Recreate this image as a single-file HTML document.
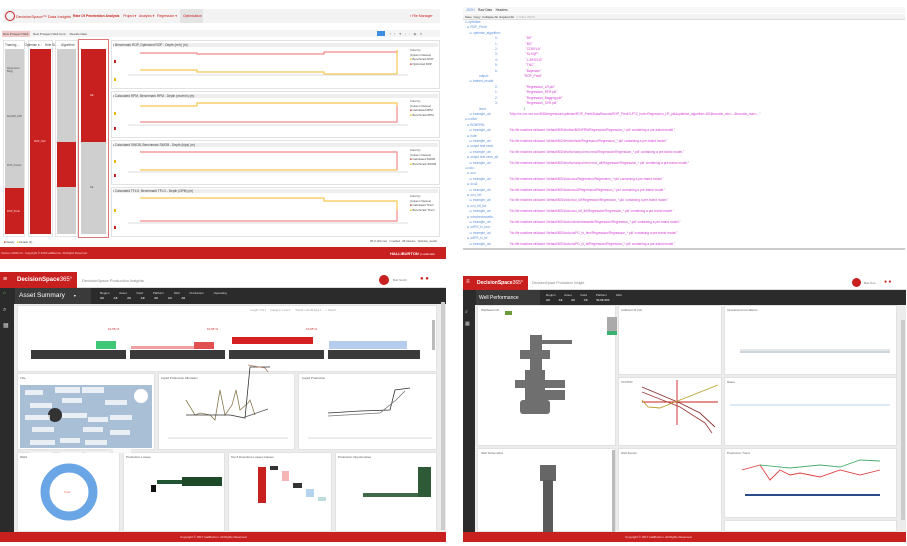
<html><head><style>
*{margin:0;padding:0;box-sizing:border-box}
body{width:907px;height:546px;background:#fff;position:relative;overflow:hidden;font-family:"Liberation Sans",sans-serif;font-size:3px;color:#444}
div{position:absolute}
.r{background:#c8201f}.g{background:#cfcfcf}
.pn{background:#fff;border:1px solid #e2e2e2}
.j{white-space:nowrap;font-size:3.2px;line-height:5.4px}
.k{color:#5b8fd8}.v{color:#d23bd0}
.dk{background:#2b2b2b}
</style></head><body>

<!-- TOP LEFT -->
<div style="left:3px;top:9px;width:437px;height:14px;background:#f3f3f3"></div>
<div style="left:5px;top:11px;width:10px;height:10px;border-radius:50%;border:1.5px solid #c8201f"></div>
<div style="left:16px;top:13.5px;font-size:4px;color:#c8201f;white-space:nowrap">DecisionSpace™ Data Insights</div>
<div style="left:73px;top:14px;font-size:3.4px;color:#c8201f;font-weight:bold;white-space:nowrap">Rate Of Penetration Analysis &nbsp;&nbsp; <span style="font-weight:normal">Project ▾ &nbsp; Analysis ▾ &nbsp; Regression ▾</span></div>
<div style="left:180px;top:9px;width:23px;height:14px;background:#e4e4e4"></div>
<div style="left:183px;top:14px;font-size:3.4px;color:#c8201f">Optimisation</div>
<div style="left:410px;top:14px;font-size:3.5px;color:#c8201f">▪ File Manager</div>
<div style="left:2px;top:30px;width:438px;height:7px;background:#f4f4f4"></div>
<div style="left:2px;top:31px;width:28px;height:6px;background:#f1c9c9;font-size:3px;padding:1px">New Prospect Well</div>
<div style="left:33px;top:32px;font-size:3px">New Prospect Well Cont. &nbsp;&nbsp; Results Data</div>
<div style="left:377px;top:31px;width:8px;height:5px;background:#3a8fe0"></div>
<div style="left:390px;top:32px;font-size:3.5px;color:#888;letter-spacing:3px">▪▪▼▫▫◉✕</div>
<div style="left:3px;top:40px;width:22px;height:197px;border:1px solid #e5e5e5"></div>
<div class="g" style="left:5px;top:49px;width:19px;height:139px"></div>
<div class="r" style="left:5px;top:188px;width:19px;height:46px"></div>
<div style="left:28px;top:40px;width:25px;height:197px;border:1px solid #e5e5e5"></div>
<div class="r" style="left:30px;top:49px;width:21px;height:185px"></div>
<div style="left:55px;top:40px;width:23px;height:197px;border:1px solid #e5e5e5"></div>
<div class="g" style="left:57px;top:49px;width:19px;height:93px"></div>
<div class="r" style="left:57px;top:142px;width:19px;height:45px"></div>
<div class="g" style="left:57px;top:187px;width:19px;height:47px"></div>
<div style="left:78px;top:39px;width:31px;height:199px;border:1px solid #d77"></div>
<div class="r" style="left:81px;top:49px;width:25px;height:93px"></div>
<div class="g" style="left:81px;top:142px;width:25px;height:92px"></div>
<div style="left:5px;top:43px;font-size:3.2px;white-space:nowrap">Training ... &nbsp;&nbsp;&nbsp; Optimise s... &nbsp; Hole Si... &nbsp;&nbsp; Algorithm</div>
<div style="left:7px;top:67px;font-size:2.5px;color:#555">Regression<br>Bagg</div>
<div style="left:7px;top:115px;font-size:2.5px;color:#555">RegWR_EXP</div>
<div style="left:7px;top:164px;font-size:2.5px;color:#555">ROP_Output</div>
<div style="left:7px;top:210px;font-size:2.5px;color:#fdd">ROP_Predi</div>
<div style="left:34px;top:140px;font-size:2.5px;color:#fdd">ROP_Optl</div>
<div style="left:90px;top:94px;font-size:2.5px;color:#fdd">DE</div>
<div style="left:90px;top:186px;font-size:2.5px;color:#555">DE</div>
<!-- charts -->
<div class="pn" style="left:111px;top:40px;width:329px;height:49px"></div>
<div class="pn" style="left:111px;top:91px;width:329px;height:47px"></div>
<div class="pn" style="left:111px;top:140px;width:329px;height:45px"></div>
<div class="pn" style="left:111px;top:187px;width:329px;height:50px"></div>
<div style="left:113px;top:43px;width:325px;height:4px;background:#eee;font-size:3.2px">▪ Benchmark ROP, Optimized ROP - Depth (m/h) (m)</div>
<div style="left:113px;top:94px;width:325px;height:4px;background:#eee;font-size:3.2px">▪ Calculated RPM, Benchmark RPM - Depth (rev/min) (m)</div>
<div style="left:113px;top:143px;width:325px;height:4px;background:#eee;font-size:3.2px">▪ Calculated SWOB, Benchmark SWOB - Depth (kips) (m)</div>
<div style="left:113px;top:189px;width:325px;height:4px;background:#eee;font-size:3.2px">▪ Calculated TFLO, Benchmark TFLO - Depth (GPM) (m)</div>
<svg style="position:absolute;left:0;top:0" width="450" height="260">
<g fill="none" stroke-width="1.2">
<polyline stroke="#f08a8a" points="140,53 197,53 197,54 324,54 324,52 397,52 397,50"/>
<polyline stroke="#f5c850" points="140,70 197,70 197,72 324,72 324,74 397,74 397,50"/>
<polyline stroke="#f5c850" points="140,106 197,106 197,103 324,103 324,103 397,103 397,106"/>
<polyline stroke="#f08a8a" points="140,122 397,122 397,106"/>
<polyline stroke="#f08a8a" points="140,152 397,152 397,170"/>
<polyline stroke="#f5c850" points="140,170 397,170"/>
<polyline stroke="#f5c850" points="140,198 197,198 324,198 324,201 397,201 397,210"/>
<polyline stroke="#f08a8a" points="140,221 397,221 397,210"/>
</g>
<g stroke="#ddd"><line x1="128" y1="75" x2="408" y2="75"/><line x1="128" y1="125" x2="408" y2="125"/><line x1="128" y1="172" x2="408" y2="172"/><line x1="128" y1="223" x2="408" y2="223"/></g>
<g fill="#c8201f"><rect x="114" y="60" width="2" height="3"/><rect x="114" y="127" width="2" height="3"/><rect x="114" y="174" width="2" height="3"/><rect x="114" y="226" width="2" height="3"/></g>
<g fill="#e8b800"><rect x="114" y="78" width="2" height="3"/><rect x="114" y="112" width="2" height="3"/><rect x="114" y="160" width="2" height="3"/><rect x="114" y="209" width="2" height="3"/></g>
</svg>
<div style="left:410px;top:48px;font-size:2.8px;line-height:4.5px">Color by<br>(Column Names)<br><span style="color:#e8b800">■</span> Benchmark ROP<br><span style="color:#c8201f">■</span> Optimized ROP</div>
<div style="left:410px;top:99px;font-size:2.8px;line-height:4.5px">Color by<br>(Column Names)<br><span style="color:#c8201f">■</span> Calculated RPM<br><span style="color:#e8b800">■</span> Benchmark RPM</div>
<div style="left:410px;top:148px;font-size:2.8px;line-height:4.5px">Color by<br>(Column Names)<br><span style="color:#c8201f">■</span> Calculated SWOB<br><span style="color:#e8b800">■</span> Benchmark SWOB</div>
<div style="left:410px;top:194px;font-size:2.8px;line-height:4.5px">Color by<br>(Column Names)<br><span style="color:#c8201f">■</span> Calculated TFLO<br><span style="color:#e8b800">■</span> Benchmark TFLO</div>
<div style="left:4px;top:240px;font-size:2.8px"><span style="color:#c8201f">■</span> Ready &nbsp; <span style="color:#e8b800">■</span> Details (1)...</div>
<div style="left:370px;top:240px;font-size:2.6px;white-space:nowrap">38 of 104 rows &nbsp; 4 marked &nbsp; 28 columns &nbsp; Optimise_results</div>
<div class="r" style="left:0;top:247px;width:446px;height:12px"></div>
<div style="left:1px;top:251px;font-size:2.8px;color:#fcc">Version v2020.13 - Copyright © 2018 Halliburton. All Rights Reserved.</div>
<div style="left:390px;top:251px;font-size:4px;color:#fff;font-weight:bold;white-space:nowrap">HALLIBURTON <span style="font-weight:normal;font-size:3px">| Landmark</span></div>

<!-- TOP RIGHT JSON -->
<div style="left:463px;top:7px;width:442px;height:6px;background:#f7f7f7"></div>
<div style="left:466px;top:8px;font-size:3.2px;color:#333"><span class="k">JSON</span> &nbsp;&nbsp; Raw Data &nbsp;&nbsp; Headers</div>
<div style="left:463px;top:14px;width:442px;height:6px;background:#f2f2f2;border-bottom:1px solid #ddd"></div>
<div style="left:465px;top:15px;font-size:3px;color:#333">Save &nbsp;Copy &nbsp;Collapse All &nbsp;Expand All &nbsp; <span style="color:#aaa">▽ Filter JSON</span></div>
<div class="j" style="left:465px;top:20px">
<span class="k">⊟ optimise:</span><br>
<span class="k">&nbsp;&nbsp;⊟ ROP_Predi:</span><br>
<span class="k">&nbsp;&nbsp;&nbsp;&nbsp;&nbsp;⊟ optimise_algorithm:</span><br>
<span class="k" style="padding-left:30px">0:</span><span class="v" style="padding-left:28px">"DE"</span><br>
<span class="k" style="padding-left:30px">1:</span><span class="v" style="padding-left:28px">"BO"</span><br>
<span class="k" style="padding-left:30px">2:</span><span class="v" style="padding-left:28px">"COBYLA"</span><br>
<span class="k" style="padding-left:30px">3:</span><span class="v" style="padding-left:28px">"SLSQP"</span><br>
<span class="k" style="padding-left:30px">4:</span><span class="v" style="padding-left:28px">"L-BFGS-B"</span><br>
<span class="k" style="padding-left:30px">5:</span><span class="v" style="padding-left:28px">"TNC"</span><br>
<span class="k" style="padding-left:30px">6:</span><span class="v" style="padding-left:28px">"Bayesian"</span><br>
<span class="k" style="padding-left:14px">output:</span><span class="v" style="padding-left:35px">"ROP_Predi"</span><br>
<span class="k">&nbsp;&nbsp;&nbsp;&nbsp;&nbsp;⊟ trained_model:</span><br>
<span class="k" style="padding-left:30px">0:</span><span class="v" style="padding-left:28px">"Regression_LR.pkl"</span><br>
<span class="k" style="padding-left:30px">1:</span><span class="v" style="padding-left:28px">"Regression_RFR.pkl"</span><br>
<span class="k" style="padding-left:30px">2:</span><span class="v" style="padding-left:28px">"Regression_Bagging.pkl"</span><br>
<span class="k" style="padding-left:30px">3:</span><span class="v" style="padding-left:28px">"Regression_SVR.pkl"</span><br>
<span class="k" style="padding-left:14px">level:</span><span style="color:#4a4;padding-left:37px">1</span><br>
<span class="k">&nbsp;&nbsp;&nbsp;&nbsp;&nbsp;⊟ example_url:</span><span class="v" style="padding-left:18px">"http://xx.xxx.xxx.xxx:8080/regression/optimise/ROP_Predi/Data/Bounds/ROP_Predi?LPT2_hole=Regression_LR_pkl&amp;optimise_algorithm=DE&amp;bounds_min=...&amp;bounds_max=..."</span><br>
<span class="k">⊟ nolive:</span><br>
<span class="k">&nbsp;&nbsp;⊟ BGNPRN:</span><br>
<span class="k">&nbsp;&nbsp;&nbsp;&nbsp;&nbsp;⊟ example_url:</span><span class="v" style="padding-left:18px">"No file matches wildcard '/default/BGN/nolive/BGNPRN/Regression/Regression_*.pkl' containing a pre-traind model."</span><br>
<span class="k">&nbsp;&nbsp;⊟ hole:</span><br>
<span class="k">&nbsp;&nbsp;&nbsp;&nbsp;&nbsp;⊟ example_url:</span><span class="v" style="padding-left:18px">"No file matches wildcard '/default/BGN/nolive/hole/Regression/Regression_*.pkl' containing a pre-traind model."</span><br>
<span class="k">&nbsp;&nbsp;⊟ output test neck:</span><br>
<span class="k">&nbsp;&nbsp;&nbsp;&nbsp;&nbsp;⊟ example_url:</span><span class="v" style="padding-left:18px">"No file matches wildcard '/default/BGN/nolive/output test neck/Regression/Regression_*.pkl' containing a pre-traind model."</span><br>
<span class="k">&nbsp;&nbsp;⊟ output test neck_all:</span><br>
<span class="k">&nbsp;&nbsp;&nbsp;&nbsp;&nbsp;⊟ example_url:</span><span class="v" style="padding-left:18px">"No file matches wildcard '/default/BGN/nolive/output test neck_all/Regression/Regression_*.pkl' containing a pre-traind model."</span><br>
<span class="k">⊟ odc:</span><br>
<span class="k">&nbsp;&nbsp;⊟ ocu:</span><br>
<span class="k">&nbsp;&nbsp;&nbsp;&nbsp;&nbsp;⊟ example_url:</span><span class="v" style="padding-left:18px">"No file matches wildcard '/default/BGN/odc/ocu/Regression/Regression_*.pkl' containing a pre-traind model."</span><br>
<span class="k">&nbsp;&nbsp;⊟ ocu2:</span><br>
<span class="k">&nbsp;&nbsp;&nbsp;&nbsp;&nbsp;⊟ example_url:</span><span class="v" style="padding-left:18px">"No file matches wildcard '/default/BGN/odc/ocu2/Regression/Regression_*.pkl' containing a pre-traind model."</span><br>
<span class="k">&nbsp;&nbsp;⊟ ocu_ldf:</span><br>
<span class="k">&nbsp;&nbsp;&nbsp;&nbsp;&nbsp;⊟ example_url:</span><span class="v" style="padding-left:18px">"No file matches wildcard '/default/BGN/odc/ocu_ldf/Regression/Regression_*.pkl' containing a pre-traind model."</span><br>
<span class="k">&nbsp;&nbsp;⊟ ocu_ldf_tht:</span><br>
<span class="k">&nbsp;&nbsp;&nbsp;&nbsp;&nbsp;⊟ example_url:</span><span class="v" style="padding-left:18px">"No file matches wildcard '/default/BGN/odc/ocu_ldf_tht/Regression/Regression_*.pkl' containing a pre-traind model."</span><br>
<span class="k">&nbsp;&nbsp;⊟ odncheckswells:</span><br>
<span class="k">&nbsp;&nbsp;&nbsp;&nbsp;&nbsp;⊟ example_url:</span><span class="v" style="padding-left:18px">"No file matches wildcard '/default/BGN/odc/odncheckswells/Regression/Regression_*.pkl' containing a pre-traind model."</span><br>
<span class="k">&nbsp;&nbsp;⊟ odPG_fx_bnn:</span><br>
<span class="k">&nbsp;&nbsp;&nbsp;&nbsp;&nbsp;⊟ example_url:</span><span class="v" style="padding-left:18px">"No file matches wildcard '/default/BGN/odc/odPG_fx_bnn/Regression/Regression_*.pkl' containing a pre-traind model."</span><br>
<span class="k">&nbsp;&nbsp;⊟ odPG_fx_bf:</span><br>
<span class="k">&nbsp;&nbsp;&nbsp;&nbsp;&nbsp;⊟ example_url:</span><span class="v" style="padding-left:18px">"No file matches wildcard '/default/BGN/odc/odPG_fx_bf/Regression/Regression_*.pkl' containing a pre-traind model."</span>
</div>
<div style="left:463px;top:248px;width:442px;height:2px;background:#ccc"></div>

<!-- BOTTOM LEFT -->
<div style="left:0;top:272px;width:446px;height:260px;background:#ececec"></div>
<div style="left:0;top:272px;width:446px;height:16px;background:#fff;border-bottom:1px solid #ddd"></div>
<div class="r" style="left:0;top:272px;width:77px;height:16px"></div>
<div style="left:3px;top:276px;font-size:7px;color:#fff">≡</div>
<div style="left:17px;top:277px;font-size:6px;color:#fff;font-weight:bold;white-space:nowrap">DecisionSpace<span style="font-weight:normal">365°</span></div>
<div style="left:82px;top:278px;font-size:4px;color:#888">DecisionSpace Production Insights</div>
<div style="left:379px;top:275px;width:10px;height:10px;border-radius:50%;background:#c8201f"></div>
<div style="left:393px;top:278px;font-size:3px;color:#777">Bob Smith</div>
<div style="left:420px;top:276px;font-size:6px;color:#c8201f">● ●</div>
<div class="dk" style="left:0;top:288px;width:446px;height:16px"></div>
<div class="dk" style="left:0;top:288px;width:14px;height:244px"></div>
<div style="left:3px;top:290px;font-size:5px;color:#4c4">⌂</div>
<div style="left:3px;top:307px;font-size:6px;color:#ccc">⌕</div>
<div style="left:3px;top:322px;font-size:6px;color:#ccc">▦</div>
<div style="left:15px;top:288px;width:76px;height:16px;background:#3a3a3a"></div>
<div style="left:19px;top:292px;font-size:6.5px;color:#fff;white-space:nowrap">Asset Summary &nbsp;&nbsp;&nbsp;&nbsp;<span style="font-size:4px">▾</span></div>
<div style="left:100px;top:291px;font-size:3px;color:#ddd;line-height:5px;word-spacing:9px;white-space:nowrap">Region Asset Field Platform Well Production Operating<br><b>All All All All All All All</b></div>
<div class="pn" style="left:17px;top:305px;width:420px;height:67px"></div>
<div style="left:250px;top:309px;width:180px;height:4px;font-size:2.6px;color:#999;white-space:nowrap">Length: 1 W ▾ &nbsp;&nbsp;&nbsp;&nbsp; Category: Lines ▾ &nbsp;&nbsp;&nbsp;&nbsp;&nbsp; Period: Last 30 days ▾ &nbsp;&nbsp;&nbsp;&nbsp; ⌕ Search</div>
<div style="left:31px;top:350px;width:95px;height:9px;background:#3a3a3a"></div>
<div style="left:130px;top:350px;width:95px;height:9px;background:#3a3a3a"></div>
<div style="left:229px;top:350px;width:95px;height:9px;background:#3a3a3a"></div>
<div style="left:328px;top:350px;width:92px;height:9px;background:#3a3a3a"></div>
<div style="left:96px;top:341px;width:20px;height:8px;background:#3ec777"></div>
<div style="left:131px;top:346px;width:80px;height:3px;background:#f0a0a0"></div>
<div style="left:194px;top:342px;width:20px;height:7px;background:#e05050"></div>
<div style="left:232px;top:337px;width:81px;height:7px;background:#d42020"></div>
<div style="left:329px;top:341px;width:78px;height:8px;background:#b6cdee"></div>
<div style="left:108px;top:327px;font-size:3px;color:#c8201f">10.95 %</div>
<div style="left:207px;top:327px;font-size:3px;color:#c8201f">10.95 %</div>
<div style="left:306px;top:327px;font-size:3px;color:#c8201f">10.95 %</div>
<div style="left:432px;top:320px;width:3px;height:30px;background:#bbb"></div>
<div style="left:441px;top:302px;width:4px;height:228px;background:#ccc"></div>
<div class="pn" style="left:17px;top:373px;width:138px;height:77px"></div>
<div class="pn" style="left:158px;top:373px;width:137px;height:77px"></div>
<div class="pn" style="left:298px;top:373px;width:139px;height:77px"></div>
<div style="left:20px;top:385px;width:132px;height:63px;background:#a9bfd6"></div>
<div style="left:48px;top:408px;width:14px;height:14px;border-radius:50%;background:#333"></div>
<div style="left:134px;top:389px;width:14px;height:14px;border-radius:50%;background:#fff"></div>
<div class="pn" style="left:17px;top:452px;width:103px;height:80px"></div>
<div class="pn" style="left:123px;top:452px;width:102px;height:80px"></div>
<div class="pn" style="left:228px;top:452px;width:104px;height:80px"></div>
<div class="pn" style="left:335px;top:452px;width:102px;height:80px"></div>
<svg style="position:absolute;left:0;top:265px" width="450" height="281">
<g fill="#fff" opacity=".75"><rect x="25" y="125" width="18" height="5"/><rect x="55" y="122" width="25" height="6"/><rect x="82" y="122" width="22" height="6"/><rect x="30" y="138" width="22" height="5"/><rect x="62" y="133" width="20" height="5"/><rect x="105" y="135" width="22" height="5"/><rect x="25" y="150" width="25" height="5"/><rect x="62" y="148" width="25" height="5"/><rect x="88" y="152" width="20" height="5"/><rect x="110" y="150" width="22" height="5"/><rect x="32" y="162" width="22" height="5"/><rect x="83" y="162" width="20" height="5"/><rect x="30" y="175" width="25" height="5"/><rect x="60" y="173" width="20" height="5"/><rect x="85" y="175" width="22" height="5"/><rect x="110" y="165" width="20" height="5"/><rect x="30" y="187" width="22" height="5"/><rect x="60" y="187" width="22" height="5"/><rect x="85" y="187" width="25" height="5"/><rect x="113" y="183" width="18" height="5"/></g>
<g fill="none" stroke-width=".8"><polyline stroke="#8a7a50" points="186,135 195,150 200,148 210,150 215,155 220,125 225,150 232,140 236,125 240,145 248,138 250,135 255,150"/><polyline stroke="#333" points="186,150 230,150 245,153 250,102 270,102"/><polyline stroke="#b08060" points="248,100 265,103 268,107"/><polyline stroke="#555" points="245,152 268,144"/><polyline stroke="#333" points="328,148 360,146 390,145 395,125 410,123"/><polyline stroke="#777" points="328,151 380,148 396,135 405,126"/><polyline stroke="#ccc" points="168,173 288,173"/><polyline stroke="#ccc" points="308,173 432,173"/></g>
<g fill="none" stroke="#6aa6e6" stroke-width="9"><circle cx="69" cy="227" r="24"/></g>
<text x="64" y="228" font-size="3" fill="#e07050">Total</text>
<rect x="151" y="220" width="5" height="7" fill="#111"/><rect x="157" y="215" width="25" height="4" fill="#225533"/><rect x="182" y="212" width="40" height="9" fill="#1f4a2a"/>
<rect x="258" y="202" width="8" height="36" fill="#c8201f"/><rect x="270" y="201" width="8" height="4" fill="#333"/><rect x="282" y="206" width="7" height="10" fill="#f5b5b5"/><rect x="293" y="218" width="9" height="5" fill="#333"/><rect x="306" y="224" width="8" height="8" fill="#b6d4f0"/><rect x="318" y="232" width="8" height="4" fill="#bdd"/>
<rect x="363" y="228" width="65" height="4" fill="#3f6a48"/><rect x="418" y="202" width="13" height="30" fill="#2f5a38"/>
</svg>
<div style="left:20px;top:376px;font-size:3px;color:#555">Title</div>
<div style="left:161px;top:376px;font-size:3px;color:#555">Liquid Production Allocation</div>
<div style="left:302px;top:376px;font-size:3px;color:#555">Liquid Production</div>
<div style="left:20px;top:455px;font-size:3px;color:#555">Wells</div>
<div style="left:126px;top:455px;font-size:3px;color:#555">Production Losses</div>
<div style="left:231px;top:455px;font-size:3px;color:#555">Top 5 Downtime Losses Causes</div>
<div style="left:338px;top:455px;font-size:3px;color:#555">Production Opportunities</div>
<div class="r" style="left:0;top:532px;width:446px;height:10px"></div>
<div style="left:180px;top:535px;font-size:3px;color:#fdd">Copyright © 2017 Halliburton. All Rights Reserved.</div>

<!-- BOTTOM RIGHT -->
<div style="left:463px;top:276px;width:443px;height:256px;background:#ececec"></div>
<div style="left:463px;top:276px;width:443px;height:14px;background:#fff;border-bottom:1px solid #ddd"></div>
<div class="r" style="left:463px;top:276px;width:65px;height:14px"></div>
<div style="left:466px;top:279px;font-size:6px;color:#fff">≡</div>
<div style="left:477px;top:280px;font-size:5px;color:#fff;font-weight:bold;white-space:nowrap">DecisionSpace<span style="font-weight:normal">365°</span></div>
<div style="left:532px;top:281px;font-size:3.5px;color:#888">DecisionSpace Production Insight</div>
<div style="left:852px;top:278px;width:9px;height:9px;border-radius:50%;background:#c8201f"></div>
<div style="left:864px;top:281px;font-size:3px;color:#777">Bob Doe</div>
<div style="left:884px;top:279px;font-size:5px;color:#c8201f">● ●</div>
<div class="dk" style="left:463px;top:290px;width:443px;height:15px"></div>
<div class="dk" style="left:463px;top:290px;width:12px;height:242px"></div>
<div style="left:476px;top:290px;width:64px;height:15px;background:#3a3a3a"></div>
<div style="left:479px;top:295px;font-size:5px;color:#fff;white-space:nowrap">Well Performance</div>
<div style="left:546px;top:293px;font-size:3px;color:#ddd;line-height:4.5px;word-spacing:8px;white-space:nowrap">Region Asset Field Platform Well<br><b>All All All All W-06-004</b></div>
<div style="left:465px;top:306px;font-size:5px;color:#ccc;line-height:12px">⌕<br>▦</div>
<div class="pn" style="left:477px;top:305px;width:139px;height:141px"></div>
<div class="pn" style="left:618px;top:305px;width:104px;height:70px"></div>
<div class="pn" style="left:724px;top:305px;width:173px;height:70px"></div>
<div class="pn" style="left:618px;top:377px;width:104px;height:69px"></div>
<div class="pn" style="left:724px;top:377px;width:173px;height:69px"></div>
<div class="pn" style="left:477px;top:448px;width:139px;height:84px"></div>
<div class="pn" style="left:618px;top:448px;width:104px;height:84px"></div>
<div class="pn" style="left:724px;top:448px;width:173px;height:70px"></div>
<div class="pn" style="left:724px;top:520px;width:173px;height:12px"></div>
<div style="left:901px;top:320px;width:4px;height:200px;background:#ccc"></div>
<div style="left:612px;top:450px;width:3px;height:82px;background:#bbb"></div>
<div style="left:481px;top:308px;font-size:3px;color:#666">Wellhead Info</div>
<div style="left:505px;top:311px;width:7px;height:4px;background:#6a9a3a"></div>
<svg style="position:absolute;left:460px;top:265px" width="447" height="281">
<g fill="#6f6f6f"><rect x="70" y="70" width="12" height="35"/><rect x="60" y="85" width="30" height="9"/><rect x="82" y="75" width="30" height="4"/><rect x="65" y="105" width="20" height="40"/><rect x="55" y="115" width="50" height="8"/><rect x="85" y="125" width="20" height="10"/><rect x="60" y="135" width="30" height="14" rx="3"/></g>
<g fill="none" stroke-width=".9"><polyline stroke="#c8201f" points="182,137 258,137"/><polyline stroke="#c8201f" points="217,115 217,160"/><polyline stroke="#8a3030" points="182,122 220,138 240,148 255,162"/><polyline stroke="#a04040" points="182,127 220,142 245,158 252,168"/><polyline stroke="#b8a030" points="182,135 188,142 200,143 220,135 258,120"/><polyline stroke="#b8d0ee" points="270,140 430,140"/><polyline stroke="#ccc" points="280,85 430,85"/><polyline stroke="#9ab" points="280,87 430,87"/><polyline stroke="#e04040" points="282,205 300,200 310,215 320,205 330,210 340,208 360,212 380,205 400,210 420,205"/><polyline stroke="#4caf70" points="300,200 330,203 360,200 380,202 400,195 420,196"/><polyline stroke="#2a4a8a" stroke-width="2" points="285,230 420,230"/></g>
<rect x="80" y="200" width="16" height="16" fill="#666"/><rect x="83" y="215" width="10" height="60" fill="#5a5a5a"/>
<rect x="147" y="52" width="10" height="14" fill="#aaa"/><rect x="147" y="66" width="10" height="4" fill="#3cb070"/>
</svg>
<div style="left:621px;top:308px;font-size:3px;color:#666">Artificial Lift Info</div>
<div style="left:621px;top:380px;font-size:3px;color:#666">VLP/IPR</div>
<div style="left:727px;top:308px;font-size:3px;color:#666">Operational Conditions</div>
<div style="left:727px;top:380px;font-size:3px;color:#666">Rates</div>
<div style="left:727px;top:451px;font-size:3px;color:#666">Production Trend</div>
<div style="left:481px;top:451px;font-size:3px;color:#666">Well Schematics</div>
<div style="left:621px;top:451px;font-size:3px;color:#666">Well Events</div>
<div class="r" style="left:463px;top:532px;width:443px;height:10px"></div>
<div style="left:625px;top:535px;font-size:3px;color:#fdd">Copyright © 2017 Halliburton. All Rights Reserved.</div>
</body></html>
